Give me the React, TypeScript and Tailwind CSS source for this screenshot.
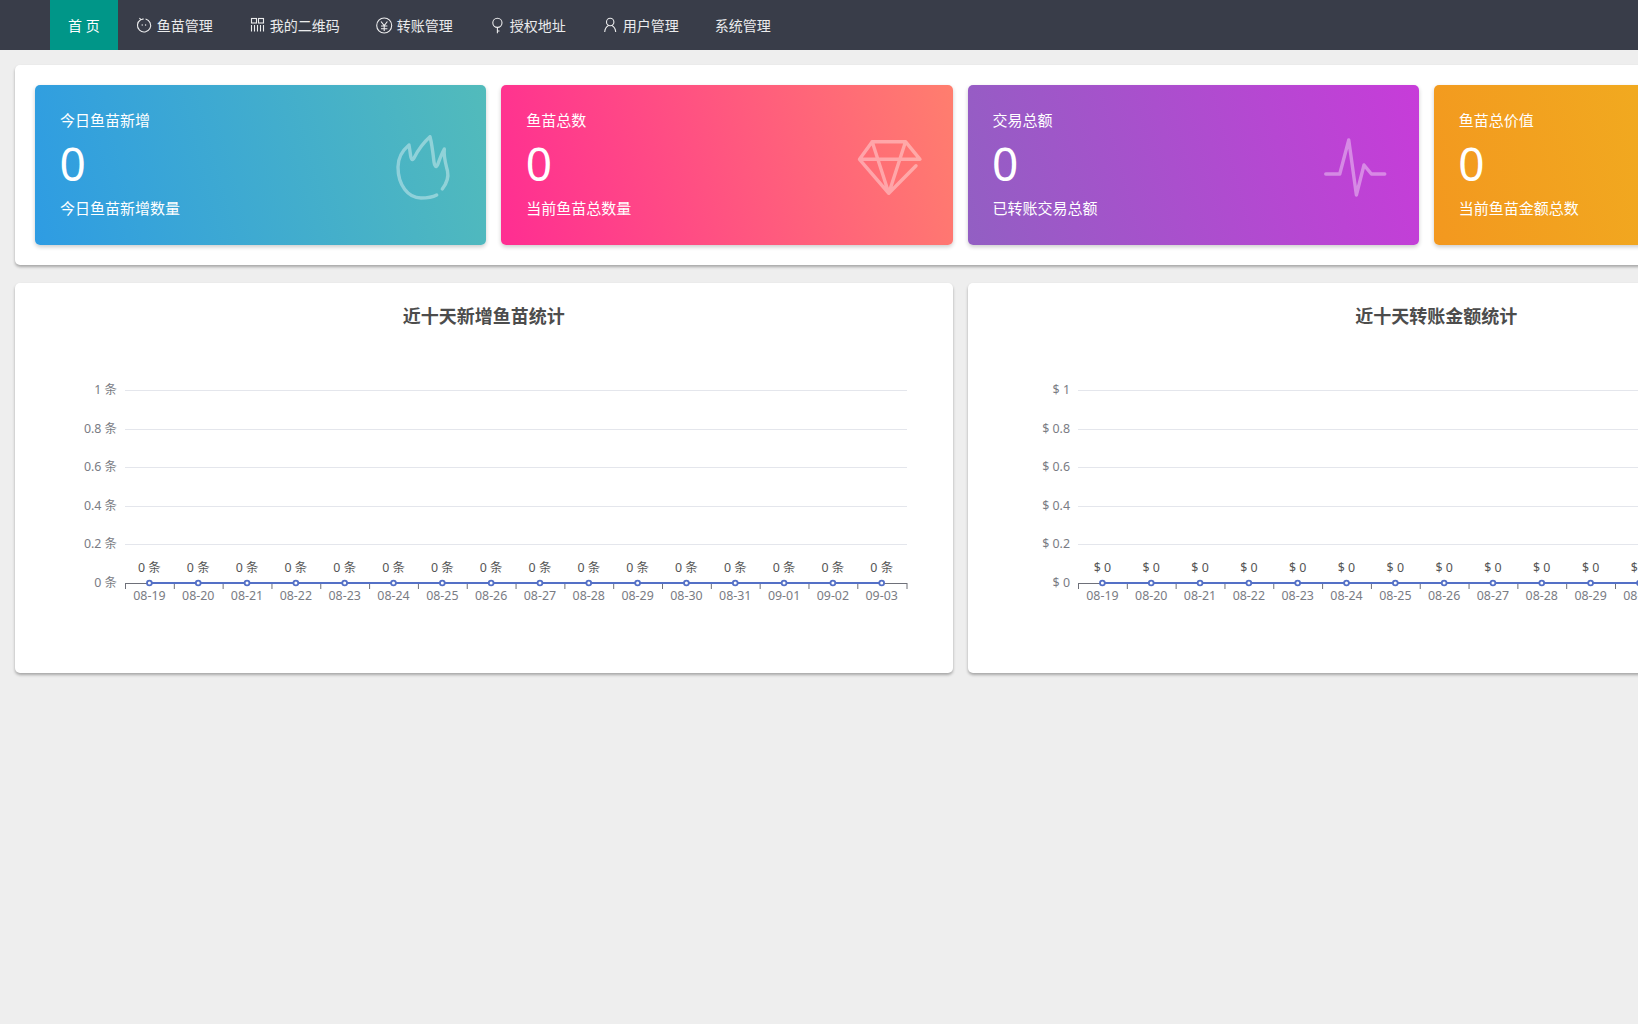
import React from 'react';

const DATES = ['08-19', '08-20', '08-21', '08-22', '08-23', '08-24', '08-25', '08-26', '08-27', '08-28', '08-29', '08-30', '08-31', '09-01', '09-02', '09-03'];
const TICKS = ['1', '0.8', '0.6', '0.4', '0.2', '0'];
const GRID_Y = [41, 80, 118, 157, 195, 234];

const FlameIcon = () => (
  <path d="M51.3 64 C56 58 58 53 56.5 46 C54.5 38 52.5 32 53.3 24 C50 30 48 36 46.5 40 C45 43 43.5 41 43 37 C42 28 41 19 39 11.7 C33 17 26 27 23 33 C21 36 20 34 19.5 30 C19 26 18.5 23 18 20 C12 25 7 33 7 42 C7 60 17 73 30 73 C36 73 41 72.5 45.7 70" />
);

const DiamondIcon = () => (
  <path d="M58 40.7 L30.8 68.3 L1.5 34.3 L14.2 16.7 H47.5 L62 34.3 H1.5 M14.2 16.7 L30.8 68.3 L47.5 16.7" />
);

const PulseIcon = () => (
  <path d="M1.75 49 H15.75 L24.75 15 L32.4 70 L40 40 L47.4 49 H60.75" />
);

const STATS = [
  { title: '今日鱼苗新增', desc: '今日鱼苗新增数量', bg: 'from-[#2e9ce3] to-[#52bbbb]', icon: <FlameIcon /> },
  { title: '鱼苗总数', desc: '当前鱼苗总数量', bg: 'from-[#ff2d92] to-[#ff7e6e]', icon: <DiamondIcon /> },
  { title: '交易总额', desc: '已转账交易总额', bg: 'from-[#925fc3] to-[#c73cd9]', icon: <PulseIcon /> },
  { title: '鱼苗总价值', desc: '当前鱼苗金额总数', bg: 'from-[#f3981f] to-[#efbb20]', icon: null },
];

const NavIcon = ({ children }: { children: React.ReactNode }) => (
  <svg width="18" height="18" viewBox="0 0 18 18" fill="none" stroke="currentColor" strokeWidth="1.1" className="shrink-0 mr-[3px]">
    {children}
  </svg>
);

const NAV_ITEMS: { label: string; icon?: React.ReactNode }[] = [
  {
    label: '鱼苗管理',
    icon: (
      <NavIcon>
        <path d="M4.6 3.8 A6.6 6.6 0 1 0 9.6 3" />
        <path d="M3.4 2 L4.9 3.7 L7.6 2.9" />
        <circle cx="6.2" cy="9" r="0.7" fill="currentColor" stroke="none" />
        <circle cx="9.6" cy="9" r="0.7" fill="currentColor" stroke="none" />
      </NavIcon>
    ),
  },
  {
    label: '我的二维码',
    icon: (
      <NavIcon>
        <rect x="2.5" y="2.5" width="5" height="4.5" />
        <rect x="9.5" y="2.5" width="5" height="4.5" />
        <path d="M2.5 9 V15.5 M5.5 9 V15.5 M8.5 9 V15.5 M11.5 9 V15.5 M14.5 9 V15.5" />
      </NavIcon>
    ),
  },
  {
    label: '转账管理',
    icon: (
      <NavIcon>
        <circle cx="8.2" cy="9.5" r="7.5" />
        <path d="M5 5.5 L8.2 9.5 L11.4 5.5 M5 10 H11.4 M5 12.8 H11.4 M8.2 9.5 V15" />
      </NavIcon>
    ),
  },
  {
    label: '授权地址',
    icon: (
      <NavIcon>
        <circle cx="8.4" cy="6.8" r="4.6" />
        <path d="M8.4 11.4 V17.3 M8.4 15 H10.5" />
      </NavIcon>
    ),
  },
  {
    label: '用户管理',
    icon: (
      <NavIcon>
        <circle cx="8.2" cy="6" r="3.7" />
        <path d="M2.7 16 C3 12.5 5 10.4 6.5 9.6 M13.7 16 C13.4 12.5 11.4 10.4 9.9 9.6" />
      </NavIcon>
    ),
  },
  { label: '系统管理' },
];

const STEP = 48.82;

const Chart = ({ title, format }: { title: string; format: (v: string) => string }) => (
  <div className="bg-white rounded-[5px] shadow-[0_2px_3px_rgba(0,0,0,0.3)] h-[390px]">
    <h3 className="h-[66px] flex items-center justify-center text-[18px] font-bold text-[#4c4c4c]">{title}</h3>
    <svg width="937" height="324" className="block text-[12.4px]">
      {GRID_Y.slice(0, 5).map(y => (
        <line key={y} x1="110" x2="892" y1={y + 0.5} y2={y + 0.5} stroke="#E4E6EC" />
      ))}
      <line x1="110" x2="892" y1="234.5" y2="234.5" stroke="#6E7079" />
      {DATES.map((_, i) => (
        <line key={i} x1={110.5 + i * STEP} x2={110.5 + i * STEP} y1="234" y2="240" stroke="#6E7079" />
      ))}
      <line x1="892" x2="892" y1="234" y2="240" stroke="#6E7079" />
      {TICKS.map((t, i) => (
        <text key={t} x="102" y={GRID_Y[i] + 4} textAnchor="end" fill="#7a7c84">{format(t)}</text>
      ))}
      <line x1={134.4} x2={134.4 + 15 * STEP} y1="234" y2="234" stroke="#5470C6" strokeWidth="2" />
      {DATES.map((d, i) => {
        const cx = 134.4 + i * STEP;
        return (
          <g key={d}>
            <circle cx={cx} cy="234" r="2.4" fill="#fff" stroke="#5470C6" strokeWidth="1.8" />
            <text x={cx} y="223" textAnchor="middle" fill="#555">{format('0')}</text>
            <text x={cx} y="251" textAnchor="middle" fill="#7a7c84">{d}</text>
          </g>
        );
      })}
    </svg>
  </div>
);

export default function App() {
  return (
    <div className="h-screen overflow-hidden bg-[#eeeeee] font-['Noto_Sans','Noto_Sans_CJK_SC',sans-serif]">
      <div className="w-[1920px]">
        {/* Top nav */}
        <nav className="h-[50px] bg-[#393D49] flex pl-[50px] text-[14px] text-white/90">
          <a className="bg-[#009688] px-[18px] flex items-center text-white">首 页</a>
          {NAV_ITEMS.map(item => (
            <a key={item.label} className="px-[18px] flex items-center">
              {item.icon}
              <span>{item.label}</span>
            </a>
          ))}
        </nav>

        <div className="p-[15px]">
          {/* Stat cards */}
          <div className="bg-white rounded-[5px] shadow-[0_2px_3px_rgba(0,0,0,0.3)] p-[20px] grid grid-cols-4 gap-[15px]">
            {STATS.map(s => (
              <div key={s.title} className={`h-[160px] rounded-[5px] bg-linear-75/srgb ${s.bg} shadow-[0_2px_4px_rgba(0,0,0,0.2)] pl-[25px] pr-[31px] flex items-center justify-between text-white`}>
                <div className="flex flex-col pb-[2px]">
                  <span className="text-[15px] leading-[20px]">{s.title}</span>
                  <span className="text-[46px] leading-[46px] mt-[10px] ml-[-0.5px]">0</span>
                  <span className="text-[15px] leading-[20px] mt-[12px]">{s.desc}</span>
                </div>
                {s.icon && (
                  <svg width="64" height="80" viewBox="0 0 64 80" fill="none" stroke="white" strokeOpacity="0.38" strokeWidth="3.4" strokeLinecap="round" strokeLinejoin="round" className="overflow-visible">
                    {s.icon}
                  </svg>
                )}
              </div>
            ))}
          </div>

          {/* Charts */}
          <div className="grid grid-cols-2 gap-[15px] mt-[18px]">
            <Chart title="近十天新增鱼苗统计" format={v => `${v} 条`} />
            <Chart title="近十天转账金额统计" format={v => `$ ${v}`} />
          </div>
        </div>
      </div>
    </div>
  );
}
